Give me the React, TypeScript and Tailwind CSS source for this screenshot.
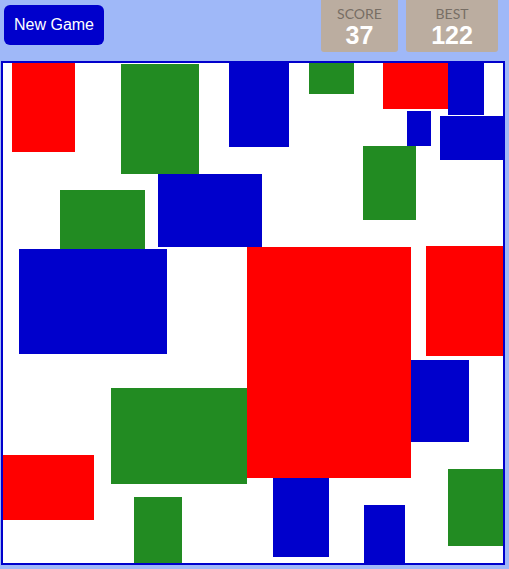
import React from 'react'

type Tile = { x: number, y: number, w: number, h: number, c: 'red' | 'green' | 'blue' }

// board coords (inside the 2px border)
const tiles: Tile[] = [
  { x: 9, y: 0, w: 63, h: 89, c: 'red' },
  { x: 118, y: 1, w: 78, h: 110, c: 'green' },
  { x: 226, y: 0, w: 60, h: 84, c: 'blue' },
  { x: 57, y: 127, w: 85, h: 59, c: 'green' },
  { x: 155, y: 111, w: 104, h: 73, c: 'blue' },
  { x: 16, y: 186, w: 148, h: 105, c: 'blue' },
  { x: 244, y: 184, w: 164, h: 231, c: 'red' },
  { x: 306, y: 0, w: 45, h: 31, c: 'green' },
  { x: 380, y: 0, w: 65, h: 46, c: 'red' },
  { x: 445, y: 0, w: 36, h: 52, c: 'blue' },
  { x: 404, y: 48, w: 24, h: 35, c: 'blue' },
  { x: 437, y: 53, w: 63, h: 44, c: 'blue' },
  { x: 360, y: 83, w: 53, h: 74, c: 'green' },
  { x: 423, y: 183, w: 77, h: 110, c: 'red' },
  { x: 108, y: 325, w: 136, h: 96, c: 'green' },
  { x: 0, y: 392, w: 91, h: 65, c: 'red' },
  { x: 131, y: 434, w: 48, h: 66, c: 'green' },
  { x: 408, y: 297, w: 58, h: 82, c: 'blue' },
  { x: 270, y: 415, w: 56, h: 79, c: 'blue' },
  { x: 361, y: 442, w: 41, h: 58, c: 'blue' },
  { x: 445, y: 406, w: 55, h: 77, c: 'green' },
]

const colorClass = {
  red: 'bg-[#ff0000]',
  green: 'bg-[#228b22]',
  blue: 'bg-[#0000cc]',
}

function ScoreBox({ label, value, width }: { label: string, value: number, width: string }) {
  return (
    <div className={`${width} h-[52px] rounded-b-[3px] bg-[#bbada0] flex flex-col items-center pt-[6px]`}>
      <div className="text-[14px] leading-[16px] text-[#776e65] font-['Lato',sans-serif]">{label}</div>
      <div className="text-[25px] leading-[26px] font-bold text-white">{value}</div>
    </div>
  )
}

export default function App() {
  return (
    <div className="min-h-[569px] w-[509px] bg-[#9fb8f8] font-['Liberation_Sans',Arial,sans-serif]">
      <div className="flex items-start justify-between h-[61px]">
        <button className="ml-1 mt-[5px] w-[100px] h-10 rounded-md bg-[#0000cc] text-white text-base">
          New Game
        </button>
        <div className="flex gap-2 mr-[11px]">
          <ScoreBox label="SCORE" value={37} width="w-[77px]" />
          <ScoreBox label="BEST" value={122} width="w-[92px]" />
        </div>
      </div>
      <div className="ml-px w-[504px] h-[504px] border-2 border-[#0000cc] bg-white relative overflow-hidden">
        {tiles.map((t, i) => (
          <div
            key={i}
            className={`absolute ${colorClass[t.c]}`}
            style={{ left: t.x, top: t.y, width: t.w, height: t.h }}
          />
        ))}
      </div>
    </div>
  )
}
